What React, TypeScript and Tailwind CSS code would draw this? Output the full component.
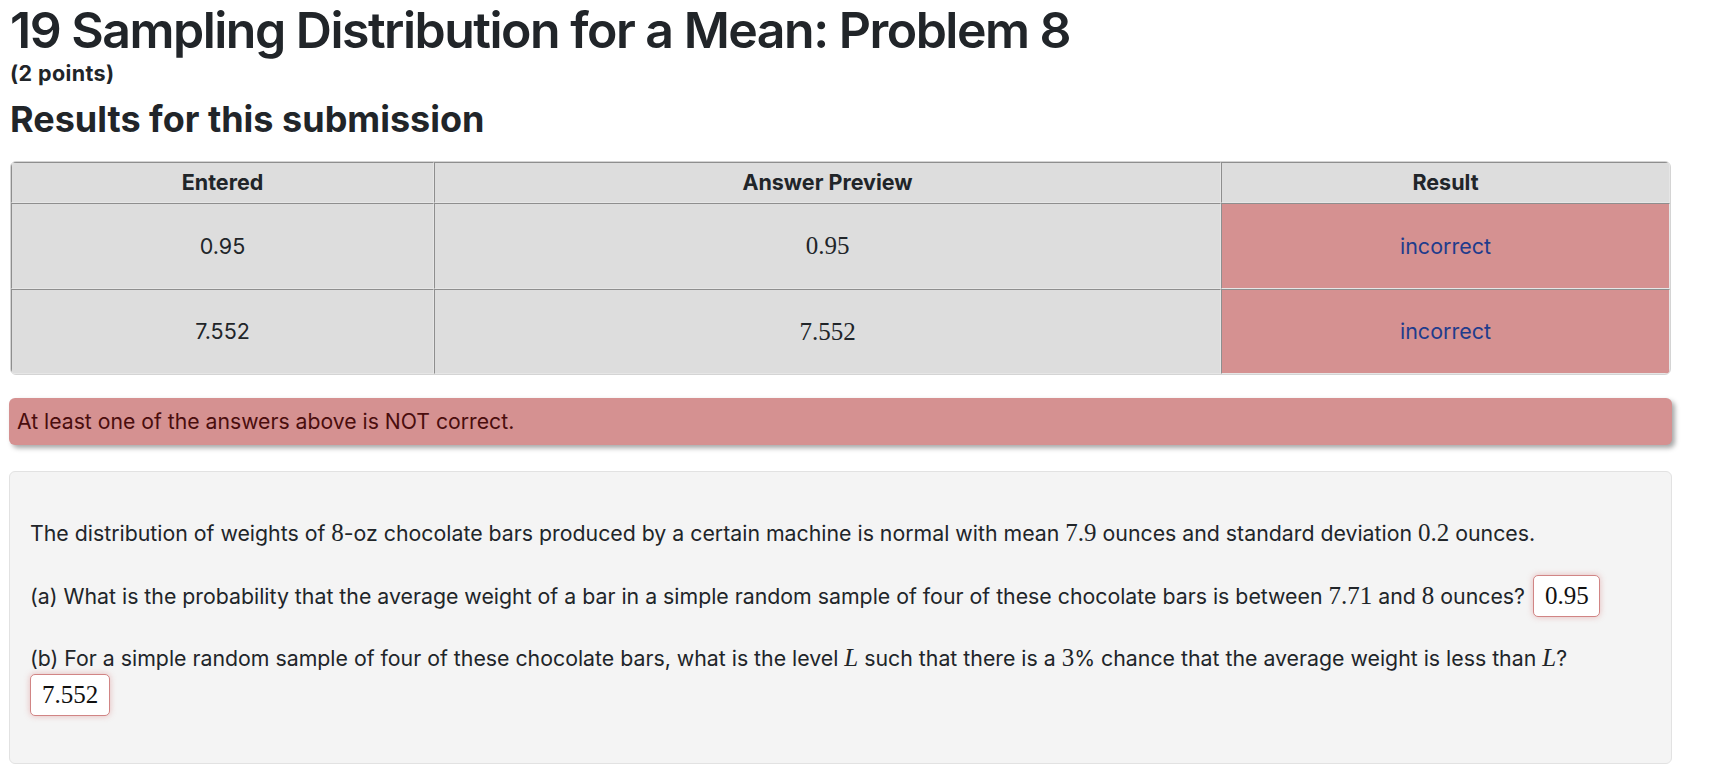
import React from "react";

const M = ({ children, italic }: { children: React.ReactNode; italic?: boolean }) => (
  <span
    className={`font-['Liberation_Serif','DejaVu_Serif',serif] text-[25px] ${italic ? "italic" : ""}`}
  >
    {children}
  </span>
);

const AnswerBox = ({ value, width, extra }: { value: string; width: string; extra?: string }) => (
  <span
    className={`inline-block align-baseline h-[42px] ${width} ${extra ?? ""} rounded-[5px] border border-[#d18585] bg-white pl-[11px] font-['Liberation_Serif','DejaVu_Serif',serif] text-[25px] leading-[40px] text-[#111] shadow-[0_0_6px_rgba(205,80,80,0.35)]`}
  >
    {value}
  </span>
);

const cell =
  "flex items-center justify-center border border-t-[#8e8e8e] border-l-[#8e8e8e] border-r-[#e6e6e6] border-b-[#e6e6e6]";

export default function App() {
  const rows = [
    { entered: "0.95", preview: "0.95", h: "h-[86px]" },
    { entered: "7.552", preview: "7.552", h: "h-[85px]" },
  ];

  return (
    <div className="min-h-[784px] w-[1716px] bg-white pl-[9px] font-['Inter','Liberation_Sans',sans-serif] text-[#212529]">
      <div className="w-[1663px]">
        <h1 className="pl-[1px] text-[50px] font-semibold leading-[61px] tracking-[-1.5px]">
          19 Sampling Distribution for a Mean: Problem 8
        </h1>
        <div className="pl-[1px] text-[21.5px] font-bold leading-[24px] tracking-[0.4px]">(2 points)</div>
        <h2 className="mt-[13px] pl-[1px] text-[36px] font-bold leading-[43px]">
          Results for this submission
        </h2>

        {/* results table */}
        <div className="ml-px mt-[20px] grid w-[1661px] grid-cols-[423px_787px_449px] overflow-hidden rounded-[6px] border border-[#d4d4d4] text-[21.5px]">
          <div className={`${cell} h-[41px] bg-[#dddddd] font-bold`}>Entered</div>
          <div className={`${cell} h-[41px] bg-[#dddddd] font-bold`}>Answer Preview</div>
          <div className={`${cell} h-[41px] bg-[#dddddd] font-bold`}>Result</div>
          {rows.map((r, i) => (
            <React.Fragment key={i}>
              <div className={`${cell} ${r.h} bg-[#dddddd]`}>{r.entered}</div>
              <div className={`${cell} ${r.h} bg-[#dddddd]`}>
                <M>{r.preview}</M>
              </div>
              <div className={`${cell} ${r.h} bg-[#d59191] text-[#1f3c8c]`}>incorrect</div>
            </React.Fragment>
          ))}
        </div>

        <div className="mt-[23px] flex h-[47px] items-center rounded-[6px] bg-[#d59191] pl-[8px] text-[21.2px] text-[#4a0d0d] shadow-[3px_3px_5px_rgba(0,0,0,0.35)]">
          At least one of the answers above is NOT correct.
        </div>

        {/* problem body */}
        <div className="mt-[26px] h-[293px] rounded-[6px] border border-[#e2e2e2] bg-[#f4f4f4] pl-[20px] pt-[45px] text-[21.3px] leading-[31px]">
          <p>
            The distribution of weights of <M>8</M>-oz chocolate bars produced by a certain machine is normal with
            mean <M>7.9</M> ounces and standard deviation <M>0.2</M> ounces.
          </p>
          <p className="mt-[26px]">
            (a) What is the probability that the average weight of a bar in a simple random sample of four of these
            chocolate bars is between <M>7.71</M> and <M>8</M> ounces?{" "}
            <AnswerBox value="0.95" width="w-[67px]" extra="ml-[2px]" />
          </p>
          <p className="mt-[25px]">
            (b) For a simple random sample of four of these chocolate bars, what is the level <M italic>L</M> such
            that there is a <M>3</M>% chance that the average weight is less than <M italic>L</M>?
            <br />
            <AnswerBox value="7.552" width="w-[80px]" />
          </p>
        </div>
      </div>
    </div>
  );
}
